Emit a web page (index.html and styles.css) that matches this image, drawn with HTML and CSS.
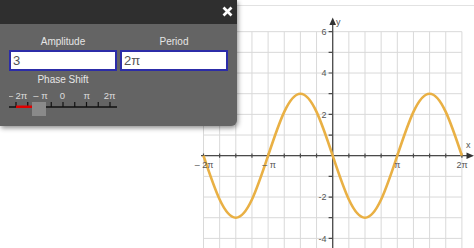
FILE: index.html
```html
<!DOCTYPE html>
<html>
<head>
<meta charset="utf-8">
<link rel="stylesheet" href="styles.css">
</head>
<body>
<div class="stage">
  <div class="graph">
    <svg class="plot" width="474" height="248" viewBox="0 0 474 248">
      <line class="frame" x1="0" y1="5.5" x2="474" y2="5.5"/>
      <g transform="translate(332.7 155.7) scale(16.15 20.67)">
        <path class="grid" d="M-8 -6V5M-7 -6V5M-6 -6V5M-5 -6V5M-4 -6V5M-3 -6V5M-2 -6V5M-1 -6V5M0 -6V5M1 -6V5M2 -6V5M3 -6V5M4 -6V5M5 -6V5M6 -6V5M7 -6V5M8 -6V5M-8 -6H8M-8 -5H8M-8 -4H8M-8 -3H8M-8 -2H8M-8 -1H8M-8 0H8M-8 1H8M-8 2H8M-8 3H8M-8 4H8"/>
      </g>
      <line class="axis" x1="201" y1="155.7" x2="469" y2="155.7"/>
      <polygon class="arrow" points="474,155.7 466.5,152.4 466.5,159"/>
      <line class="axis" x1="332.7" y1="24" x2="332.7" y2="248"/>
      <polygon class="arrow" points="332.7,17.5 329.4,25 336,25"/>
      <path class="tick" d="M203.5 153.6V157.8M219.65 153.6V157.8M235.8 153.6V157.8M251.95 153.6V157.8M268.1 153.6V157.8M284.25 153.6V157.8M300.4 153.6V157.8M316.55 153.6V157.8M348.85 153.6V157.8M365 153.6V157.8M381.15 153.6V157.8M397.3 153.6V157.8M413.45 153.6V157.8M429.6 153.6V157.8M445.75 153.6V157.8M461.9 153.6V157.8"/>
      <path class="tick" d="M328.6 31.68H332.7M328.6 52.35H332.7M328.6 73.02H332.7M328.6 93.69H332.7M328.6 114.36H332.7M328.6 135.03H332.7M328.6 176.37H332.7M328.6 197.04H332.7M328.6 217.71H332.7M328.6 238.38H332.7"/>
      <g transform="translate(332.7 155.7) scale(16.15 20.67)">
        <path class="curve" d="M-8 0C-7.2968 1.6569 -6.7032 3 -6 3C-5.2968 3 -4.7032 1.6569 -4 0C-3.2968 -1.6569 -2.7032 -3 -2 -3C-1.2968 -3 -0.7032 -1.6569 0 0C0.7032 1.6569 1.2968 3 2 3C2.7032 3 3.2968 1.6569 4 0C4.7032 -1.6569 5.2968 -3 6 -3C6.7032 -3 7.2968 -1.6569 8 0"/>
      </g>
      <text class="lbl" x="336" y="24.5">y</text>
      <text class="lbl" x="466" y="147.5">x</text>
      <text class="lbl end" x="326.5" y="35">6</text>
      <text class="lbl end" x="326.5" y="76.3">4</text>
      <text class="lbl end" x="326.5" y="117.6">2</text>
      <text class="lbl end" x="326.5" y="200.3">-2</text>
      <text class="lbl end" x="326.5" y="241.6">-4</text>
      <text class="lbl mid" x="204" y="167.5">– 2π</text>
      <text class="lbl mid" x="269" y="167.5">– π</text>
      <text class="lbl mid" x="397.3" y="167.5">π</text>
      <text class="lbl mid" x="462" y="167.5">2π</text>
    </svg>
  </div>

  <div class="dialog">
    <div class="dialog-head">
      <span class="close">
        <svg width="11" height="11" viewBox="0 0 11 11"><path d="M1.5 1.5L9.5 9.5M9.5 1.5L1.5 9.5"/></svg>
      </span>
    </div>
    <div class="dialog-body">
      <div class="field-label">Amplitude</div>
      <div class="field-label">Period</div>
      <input class="field" type="text" value="3">
      <input class="field" type="text" value="2π">
      <div class="field-label phase">Phase Shift</div>
      <div class="spacer"></div>
      <svg class="slider" width="108" height="32" viewBox="0 0 108 32">
        <text class="s-lbl" x="8.5" y="13">– 2π</text>
        <text class="s-lbl" x="31.5" y="13">– π</text>
        <text class="s-lbl" x="53.5" y="13">0</text>
        <text class="s-lbl" x="77.7" y="13">π</text>
        <text class="s-lbl" x="100.7" y="13">2π</text>
        <line class="s-track" x1="0" y1="21" x2="108" y2="21"/>
        <path class="s-tick" d="M7 16V21M18.75 16V21M30.5 16V21M42.25 16V21M54 16V21M65.75 16V21M77.5 16V21M89.25 16V21M101 16V21"/>
        <line class="s-fill" x1="7" y1="20.8" x2="23" y2="20.8"/>
        <rect class="s-handle" x="23" y="16" width="14" height="14"/>
      </svg>
    </div>
  </div>
</div>
</body>
</html>
```

FILE: styles.css
```css
html, body {
  margin: 0;
  padding: 0;
  background: #ffffff;
}

.stage {
  position: relative;
  width: 474px;
  height: 248px;
  overflow: hidden;
  font-family: "Liberation Sans", Arial, sans-serif;
}

.graph {
  width: 474px;
  height: 248px;
}

.plot {
  display: block;
}

.frame {
  stroke: #e2e2e2;
  stroke-width: 1;
}

.grid {
  fill: none;
  stroke: #d9d9d9;
  stroke-width: 1;
  vector-effect: non-scaling-stroke;
}

.axis {
  stroke: #4a4a4a;
  stroke-width: 1.3;
}

.arrow {
  fill: #333333;
}

.tick {
  fill: none;
  stroke: #4a4a4a;
  stroke-width: 1.2;
}

.curve {
  fill: none;
  stroke: #e9b044;
  stroke-width: 2.6;
  vector-effect: non-scaling-stroke;
}

.lbl {
  font-family: "Liberation Sans", Arial, sans-serif;
  font-size: 9px;
  fill: #555555;
}

.lbl.end {
  text-anchor: end;
}

.lbl.mid {
  text-anchor: middle;
}

/* dialog overlay */
.dialog {
  position: absolute;
  left: 0;
  top: 0;
  width: 237px;
  height: 126px;
  background: #646464;
  border-radius: 0 0 6px 0;
  box-shadow: 1px 2px 5px rgba(0, 0, 0, 0.45);
  overflow: hidden;
}

.dialog-head {
  height: 24px;
  background: #2f2f2f;
  display: flex;
  justify-content: flex-end;
  align-items: center;
  padding: 0 4px 2px 0;
  box-sizing: border-box;
}

.close {
  display: block;
  width: 11px;
  height: 11px;
}

.close svg {
  display: block;
}

.close path {
  stroke: #ffffff;
  stroke-width: 2.7;
  fill: none;
}

.dialog-body {
  display: grid;
  grid-template-columns: 108px 108px;
  column-gap: 3px;
  padding: 12px 9px 0 9px;
}

.field-label {
  font-size: 10px;
  line-height: 12px;
  color: #e6e6e6;
  text-align: center;
}

.field {
  box-sizing: border-box;
  width: 108px;
  height: 21px;
  margin: 2px 0 0 0;
  padding: 0 2px;
  border: 2px solid #2c2ca8;
  background: #ffffff;
  font-family: "Liberation Sans", Arial, sans-serif;
  font-size: 13px;
  color: #555555;
  outline: none;
  border-radius: 0;
}

.phase {
  margin-top: 3px;
}

.slider {
  display: block;
}

.s-lbl {
  font-family: "Liberation Sans", Arial, sans-serif;
  font-size: 9.5px;
  fill: #dcdcdc;
  text-anchor: middle;
}

.s-track {
  stroke: #111111;
  stroke-width: 1.5;
}

.s-tick {
  stroke: #111111;
  stroke-width: 1.2;
  fill: none;
}

.s-fill {
  stroke: #e00000;
  stroke-width: 2.6;
}

.s-handle {
  fill: #8a8a8a;
}
```
